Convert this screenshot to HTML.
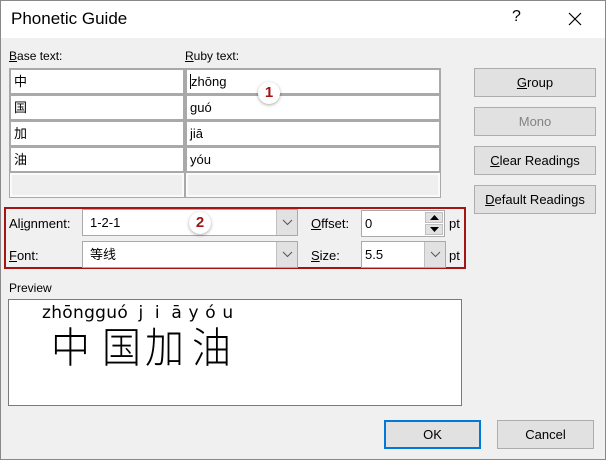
<!DOCTYPE html>
<html><head><meta charset="utf-8"><style>
*{box-sizing:border-box;margin:0;padding:0}
body{width:606px;height:460px;background:#f0f0f0;font-family:"Liberation Sans","Noto Sans CJK SC",sans-serif;font-size:12px;color:#000;position:relative;overflow:hidden}
.a{position:absolute}
.win{left:0;top:0;width:606px;height:460px;border:1px solid #888}
.title{left:1px;top:1px;width:604px;height:37px;background:#fff}
.btn{position:absolute;background:#e1e1e1;border:1px solid #adadad;text-align:center;font-size:13px}
.cell{position:absolute;background:#fff;border:1px solid #a9a9a9;font-size:13px;padding-left:3px;line-height:23px}
.cb{position:absolute;background:#fff;border:1px solid #a9a9a9;font-size:13px;padding-left:7px;line-height:25px}
.arr{position:absolute;right:0;top:0;bottom:0;width:21px;background:#e1e1e1;border-left:1px solid #c0c0c0}
u{text-decoration:underline}
.badge{position:absolute;width:22px;height:22px;border-radius:50%;background:#fff;box-shadow:0 1px 3px rgba(0,0,0,.35);color:#a31515;font-weight:bold;font-size:15px;text-align:center;line-height:22px}
.lbl{position:absolute;font-size:13px}
.zh{position:absolute;top:325px;font-size:39px;line-height:40px;font-family:'Noto Sans CJK SC',sans-serif;font-weight:300;transform:scaleY(1.08);transform-origin:50% 50%}
</style></head><body>
<div class="a win"></div>
<div class="a title"></div>
<div class="a" style="left:11px;top:9px;font-size:17px">Phonetic Guide</div>
<div class="a" style="left:512px;top:8px;font-size:16px">?</div>
<svg class="a" style="left:568px;top:12px" width="14" height="14"><path d="M1 1L13 13M13 1L1 13" stroke="#000" stroke-width="1.2"/></svg>

<div class="lbl" style="left:9px;top:49px;font-size:12px"><u>B</u>ase text:</div>
<div class="lbl" style="left:185px;top:49px;font-size:12px"><u>R</u>uby text:</div>

<div class="a" style="left:9px;top:68px;width:432px;height:130px;background:#a9a9a9"></div>
<div class="cell" style="left:10px;top:69px;width:174px;height:25px">中</div>
<div class="cell" style="left:186px;top:69px;width:254px;height:25px"><span style="border-left:1px solid #000">zhōng</span></div>
<div class="cell" style="left:10px;top:95px;width:174px;height:25px">国</div>
<div class="cell" style="left:186px;top:95px;width:254px;height:25px">guó</div>
<div class="cell" style="left:10px;top:121px;width:174px;height:25px">加</div>
<div class="cell" style="left:186px;top:121px;width:254px;height:25px">jiā</div>
<div class="cell" style="left:10px;top:147px;width:174px;height:25px">油</div>
<div class="cell" style="left:186px;top:147px;width:254px;height:25px">yóu</div>
<div class="a" style="left:10px;top:173px;width:174px;height:24px;background:#efefef;border:2px solid #fafafa"></div>
<div class="a" style="left:186px;top:173px;width:254px;height:24px;background:#efefef;border:2px solid #fafafa"></div>
<div class="badge" style="left:258px;top:82px">1</div>

<div class="btn" style="left:474px;top:68px;width:122px;height:29px;line-height:27px"><u>G</u>roup</div>
<div class="btn" style="left:474px;top:107px;width:122px;height:29px;line-height:27px;color:#838383">Mono</div>
<div class="btn" style="left:474px;top:146px;width:122px;height:29px;line-height:27px"><u>C</u>lear Readings</div>
<div class="btn" style="left:474px;top:185px;width:122px;height:29px;line-height:27px"><u>D</u>efault Readings</div>

<div class="a" style="left:4px;top:207px;width:462px;height:62px;border:2px solid #a31515"></div>
<div class="lbl" style="left:9px;top:216px">Al<u>i</u>gnment:</div>
<div class="cb" style="left:82px;top:209px;width:216px;height:27px">1-2-1<div class="arr"><svg width="21" height="25"><path d="M6 10l4.5 4.5L15 10" stroke="#555" fill="none"/></svg></div></div>
<div class="badge" style="left:189px;top:212px">2</div>
<div class="lbl" style="left:9px;top:248px"><u>F</u>ont:</div>
<div class="cb" style="left:82px;top:241px;width:216px;height:27px">等线<div class="arr"><svg width="21" height="25"><path d="M6 10l4.5 4.5L15 10" stroke="#555" fill="none"/></svg></div></div>
<div class="lbl" style="left:311px;top:216px"><u>O</u>ffset:</div>
<div class="cb" style="left:361px;top:210px;width:84px;height:27px;padding-left:3px">0
<div class="a" style="right:1px;top:1px;width:18px;height:11px;background:#e1e1e1;border:1px solid #c0c0c0"><svg class="a" style="left:4px;top:2px" width="9" height="6"><path d="M0 5L4.5 0L9 5Z" fill="#000"/></svg></div>
<div class="a" style="right:1px;top:13px;width:18px;height:11px;background:#e1e1e1;border:1px solid #c0c0c0"><svg class="a" style="left:4px;top:2px" width="9" height="6"><path d="M0 0L4.5 5L9 0Z" fill="#000"/></svg></div>
</div>
<div class="lbl" style="left:449px;top:216px">pt</div>
<div class="lbl" style="left:311px;top:248px"><u>S</u>ize:</div>
<div class="cb" style="left:361px;top:241px;width:85px;height:27px;padding-left:3px">5.5<div class="arr"><svg width="21" height="25"><path d="M6 10l4.5 4.5L15 10" stroke="#555" fill="none"/></svg></div></div>
<div class="lbl" style="left:449px;top:248px">pt</div>

<div class="lbl" style="left:9px;top:281px;font-size:12px">Preview</div>
<div class="a" style="left:8px;top:299px;width:454px;height:107px;background:#fff;border:1px solid #7a7a7a"></div>
<div class="a" style="left:42px;top:303px;font-family:'DejaVu Sans',sans-serif;font-size:17px;letter-spacing:0.3px;white-space:nowrap">zhōngguó<span style="letter-spacing:5px"> </span>j<span style="letter-spacing:6px"> </span>i<span style="letter-spacing:6px"> </span>ā<span style="letter-spacing:1px"> </span>y<span style="letter-spacing:1px"> </span>ó<span style="letter-spacing:1px"> </span>u</div>
<div class="zh" style="left:51px">中</div>
<div class="zh" style="left:102px">国</div>
<div class="zh" style="left:145px">加</div>
<div class="zh" style="left:192px">油</div>

<div class="btn" style="left:384px;top:420px;width:97px;height:29px;line-height:26px;border:2px solid #0078d7">OK</div>
<div class="btn" style="left:497px;top:420px;width:97px;height:29px;line-height:27px">Cancel</div>
</body></html>
